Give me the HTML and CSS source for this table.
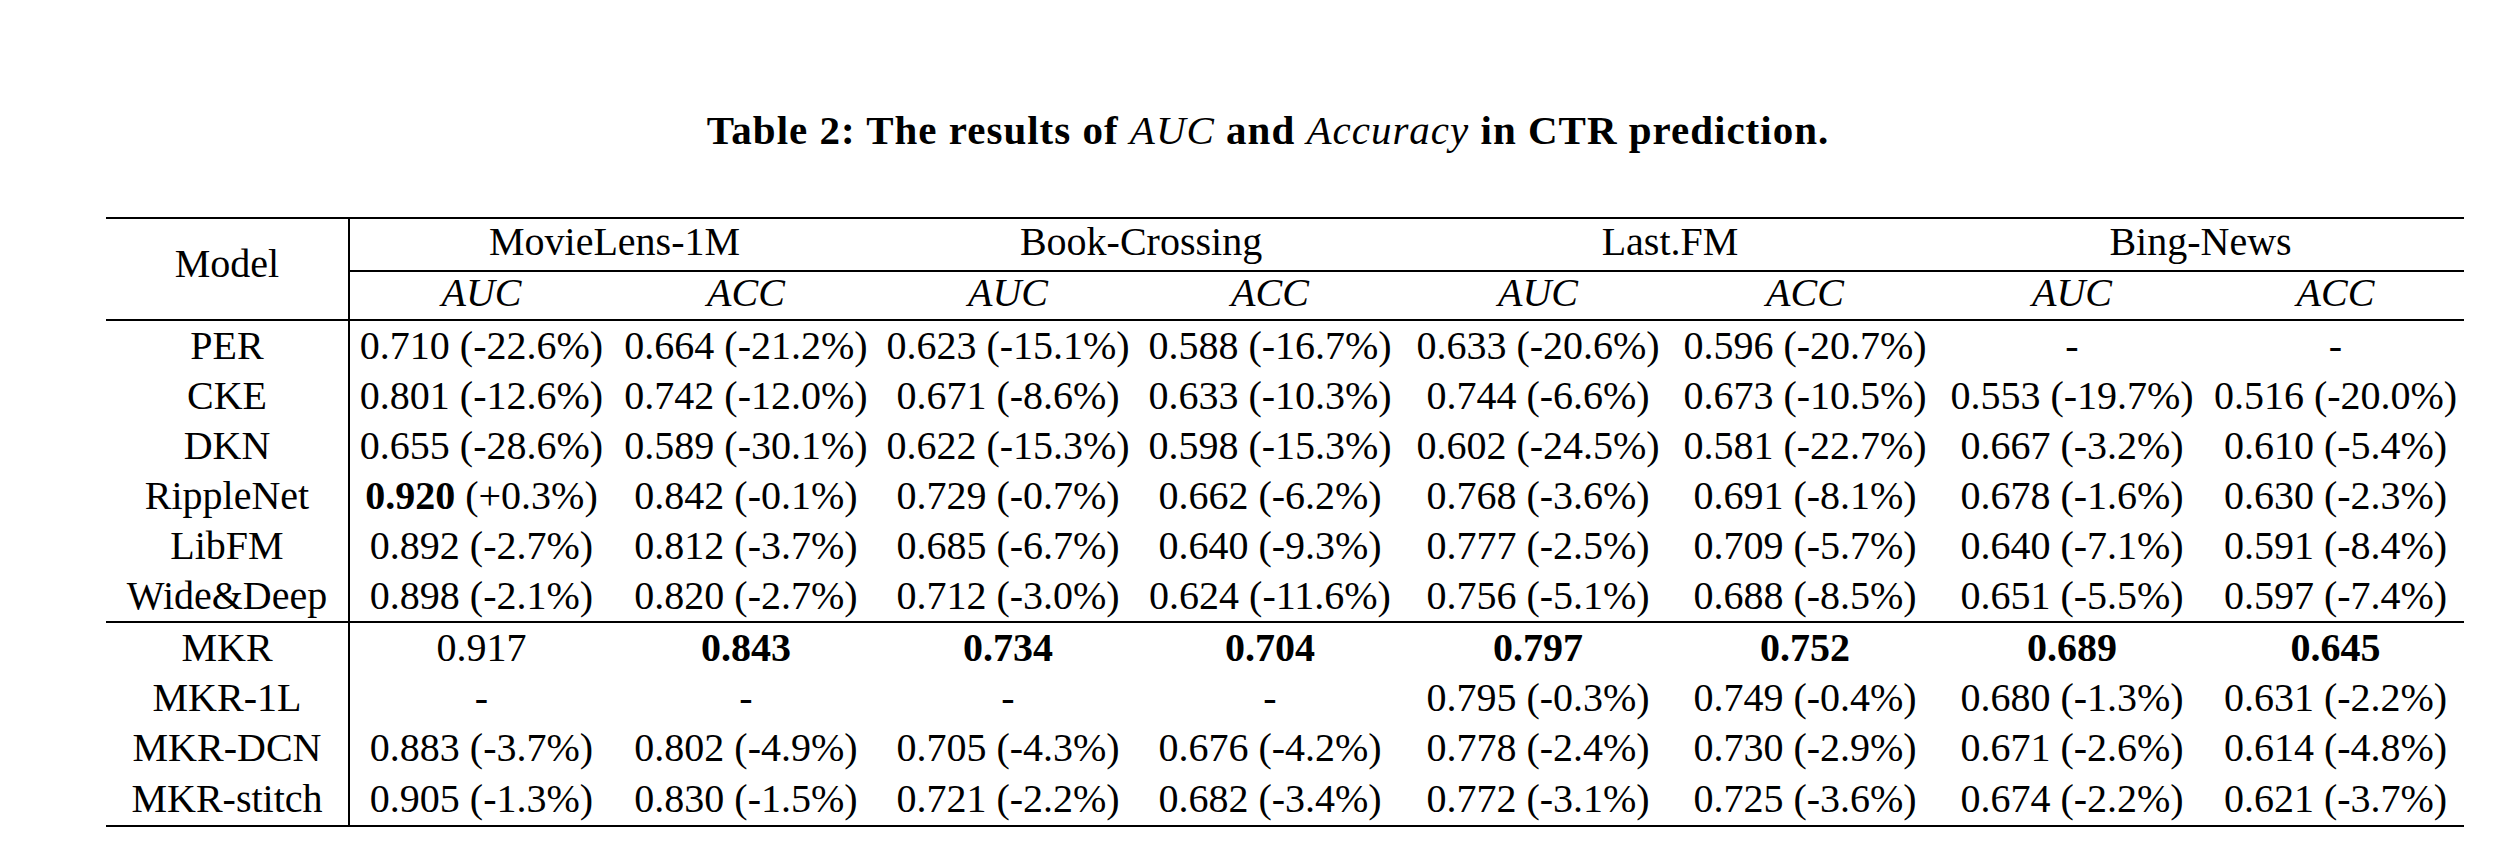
FILE: index.html
```html
<!DOCTYPE html>
<html lang="en">
<head>
<meta charset="utf-8">
<title>Table 2</title>
<link rel="stylesheet" href="styles.css">
</head>
<body>
<div class="page">
  <p class="caption">Table 2: The results of <i>AUC</i> and <i>Accuracy</i> in CTR prediction.</p>
  <table class="results">
    <colgroup>
      <col class="c-model">
      <col class="c1"><col class="c2"><col class="c3"><col class="c4">
      <col class="c5"><col class="c6"><col class="c7"><col class="c8">
    </colgroup>
    <thead>
      <tr class="h1">
        <th rowspan="2" class="model">Model</th>
        <th colspan="2">MovieLens-1M</th>
        <th colspan="2">Book-Crossing</th>
        <th colspan="2">Last.FM</th>
        <th colspan="2">Bing-News</th>
      </tr>
      <tr class="h2">
        <th><i>AUC</i></th><th><i>ACC</i></th>
        <th><i>AUC</i></th><th><i>ACC</i></th>
        <th><i>AUC</i></th><th><i>ACC</i></th>
        <th><i>AUC</i></th><th><i>ACC</i></th>
      </tr>
    </thead>
    <tbody class="baselines">
      <tr><td class="model">PER</td><td>0.710 (-22.6%)</td><td>0.664 (-21.2%)</td><td>0.623 (-15.1%)</td><td>0.588 (-16.7%)</td><td>0.633 (-20.6%)</td><td>0.596 (-20.7%)</td><td>-</td><td>-</td></tr>
      <tr><td class="model">CKE</td><td>0.801 (-12.6%)</td><td>0.742 (-12.0%)</td><td>0.671 (-8.6%)</td><td>0.633 (-10.3%)</td><td>0.744 (-6.6%)</td><td>0.673 (-10.5%)</td><td>0.553 (-19.7%)</td><td>0.516 (-20.0%)</td></tr>
      <tr><td class="model">DKN</td><td>0.655 (-28.6%)</td><td>0.589 (-30.1%)</td><td>0.622 (-15.3%)</td><td>0.598 (-15.3%)</td><td>0.602 (-24.5%)</td><td>0.581 (-22.7%)</td><td>0.667 (-3.2%)</td><td>0.610 (-5.4%)</td></tr>
      <tr><td class="model">RippleNet</td><td><b>0.920</b> (+0.3%)</td><td>0.842 (-0.1%)</td><td>0.729 (-0.7%)</td><td>0.662 (-6.2%)</td><td>0.768 (-3.6%)</td><td>0.691 (-8.1%)</td><td>0.678 (-1.6%)</td><td>0.630 (-2.3%)</td></tr>
      <tr><td class="model">LibFM</td><td>0.892 (-2.7%)</td><td>0.812 (-3.7%)</td><td>0.685 (-6.7%)</td><td>0.640 (-9.3%)</td><td>0.777 (-2.5%)</td><td>0.709 (-5.7%)</td><td>0.640 (-7.1%)</td><td>0.591 (-8.4%)</td></tr>
      <tr><td class="model">Wide&amp;Deep</td><td>0.898 (-2.1%)</td><td>0.820 (-2.7%)</td><td>0.712 (-3.0%)</td><td>0.624 (-11.6%)</td><td>0.756 (-5.1%)</td><td>0.688 (-8.5%)</td><td>0.651 (-5.5%)</td><td>0.597 (-7.4%)</td></tr>
    </tbody>
    <tbody class="ours">
      <tr><td class="model">MKR</td><td>0.917</td><td><b>0.843</b></td><td><b>0.734</b></td><td><b>0.704</b></td><td><b>0.797</b></td><td><b>0.752</b></td><td><b>0.689</b></td><td><b>0.645</b></td></tr>
      <tr><td class="model">MKR-1L</td><td>-</td><td>-</td><td>-</td><td>-</td><td>0.795 (-0.3%)</td><td>0.749 (-0.4%)</td><td>0.680 (-1.3%)</td><td>0.631 (-2.2%)</td></tr>
      <tr><td class="model">MKR-DCN</td><td>0.883 (-3.7%)</td><td>0.802 (-4.9%)</td><td>0.705 (-4.3%)</td><td>0.676 (-4.2%)</td><td>0.778 (-2.4%)</td><td>0.730 (-2.9%)</td><td>0.671 (-2.6%)</td><td>0.614 (-4.8%)</td></tr>
      <tr><td class="model">MKR-stitch</td><td>0.905 (-1.3%)</td><td>0.830 (-1.5%)</td><td>0.721 (-2.2%)</td><td>0.682 (-3.4%)</td><td>0.772 (-3.1%)</td><td>0.725 (-3.6%)</td><td>0.674 (-2.2%)</td><td>0.621 (-3.7%)</td></tr>
    </tbody>
  </table>
</div>
</body>
</html>
```

FILE: styles.css
```css
html, body {
  margin: 0;
  padding: 0;
  background: #ffffff;
  color: #000000;
}

body {
  font-family: "Liberation Serif", "Times New Roman", serif;
}

.page {
  padding: 110px 0 0 106px;
}

.caption {
  margin: 0;
  width: 2324px;
  text-align: center;
  font-size: 41px;
  line-height: 41px;
  letter-spacing: 1px;
  font-weight: bold;
}

.caption i {
  font-weight: normal;
}

.results {
  margin-top: 66px;
  border-collapse: collapse;
  table-layout: fixed;
  width: 2358px;
  font-size: 40px;
}

.c-model { width: 243px; }
.c1 { width: 264px; }
.c2 { width: 266px; }
.c3 { width: 258px; }
.c4 { width: 266px; }
.c5 { width: 270px; }
.c6 { width: 264px; }
.c7 { width: 270px; }
.c8 { width: 257px; }

.results th,
.results td {
  padding: 0;
  text-align: center;
  vertical-align: middle;
  font-weight: normal;
  white-space: nowrap;
  line-height: 40px;
  height: 50px;
}

.results b {
  font-weight: bold;
}

.results .model {
  border-right: 2px solid #000;
}

.results .h1 th {
  border-top: 2px solid #000;
  height: 46px;
  padding-bottom: 5px;
}

.results .h2 th {
  border-top: 2px solid #000;
  border-bottom: 2px solid #000;
  height: 42px;
  padding-bottom: 5px;
}

.results thead th.model {
  border-bottom: 2px solid #000;
  padding-bottom: 10px;
}

.results .ours tr:first-child td {
  border-top: 2px solid #000;
}

.results .ours tr:last-child td {
  border-bottom: 2px solid #000;
  height: 52px;
}
```
